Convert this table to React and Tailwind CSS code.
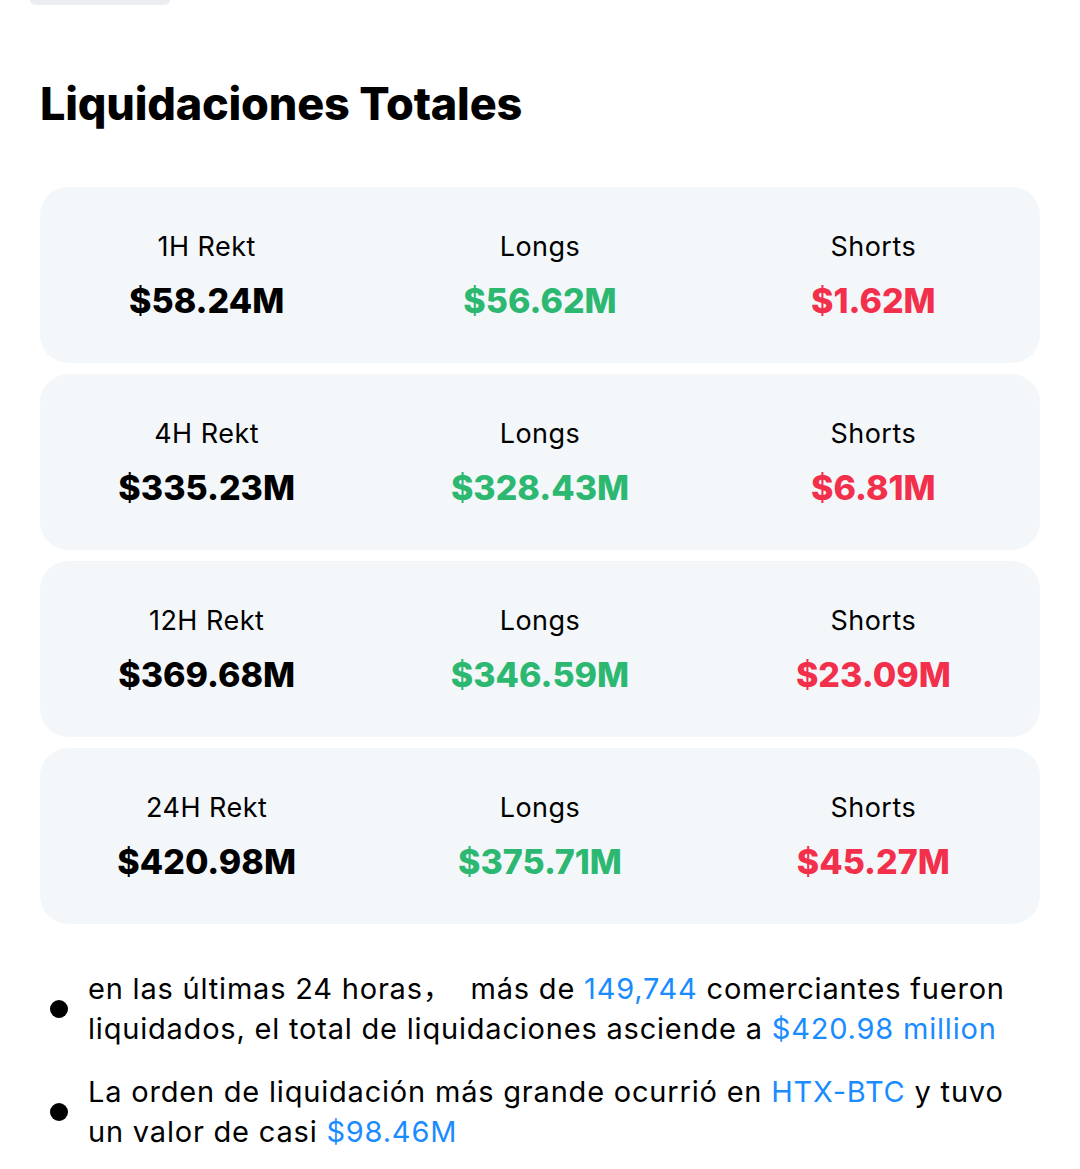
const rows = [
  { label: '1H Rekt', total: '$58.24M', longs: '$56.62M', shorts: '$1.62M' },
  { label: '4H Rekt', total: '$335.23M', longs: '$328.43M', shorts: '$6.81M' },
  { label: '12H Rekt', total: '$369.68M', longs: '$346.59M', shorts: '$23.09M' },
  { label: '24H Rekt', total: '$420.98M', longs: '$375.71M', shorts: '$45.27M' },
];

const Cell = ({ label, value, color }) => (
  <div className="flex flex-col items-center">
    <div className="text-[27px] leading-[36px] text-black tracking-[0.5px]">{label}</div>
    <div className={`mt-[16px] text-[34px] leading-[40px] font-extrabold tracking-[0px] ${color}`}>{value}</div>
  </div>
);

const App = () => {
  return (
    <div className="min-h-[1169px] bg-white px-[40px] font-['Inter','Noto_Sans_CJK_SC',sans-serif] text-black">
      <div className="ml-[-10px] h-[5px] w-[140px] rounded-b-[14px] bg-[#ebedf0]" />

      <h1 className="mt-[74px] text-[45px] leading-[50px] font-extrabold tracking-[-0.2px]">Liquidaciones Totales</h1>

      <div className="mt-[58px] flex flex-col gap-[11px]">
        {rows.map((row) => (
          <div key={row.label} className="grid h-[176px] grid-cols-3 items-center rounded-[28px] bg-[#f4f7fa]">
            <Cell label={row.label} value={row.total} color="text-black" />
            <Cell label="Longs" value={row.longs} color="text-[#2db872]" />
            <Cell label="Shorts" value={row.shorts} color="text-[#f2304c]" />
          </div>
        ))}
      </div>

      {/* resumen */}
      <ul className="mt-[45px] flex flex-col gap-[23px] text-[29px] leading-[40px]">
        <li className="flex items-center">
          <span className="h-[18px] w-[18px] shrink-0 rounded-full bg-black ml-[10px]" />
          <p className="ml-[20px] tracking-[0.8px]">
            en las últimas 24 horas，&nbsp; más de <span className="text-[#1a8cff]">149,744</span> comerciantes fueron liquidados, el total de liquidaciones asciende a <span className="text-[#1a8cff]">$420.98 million</span>
          </p>
        </li>
        <li className="flex items-center">
          <span className="h-[18px] w-[18px] shrink-0 rounded-full bg-black ml-[10px]" />
          <p className="ml-[20px] tracking-[0.8px]">
            La orden de liquidación más grande ocurrió en <span className="text-[#1a8cff]">HTX-BTC</span> y tuvo un valor de casi <span className="text-[#1a8cff]">$98.46M</span>
          </p>
        </li>
      </ul>
    </div>
  );
};

export default App;
